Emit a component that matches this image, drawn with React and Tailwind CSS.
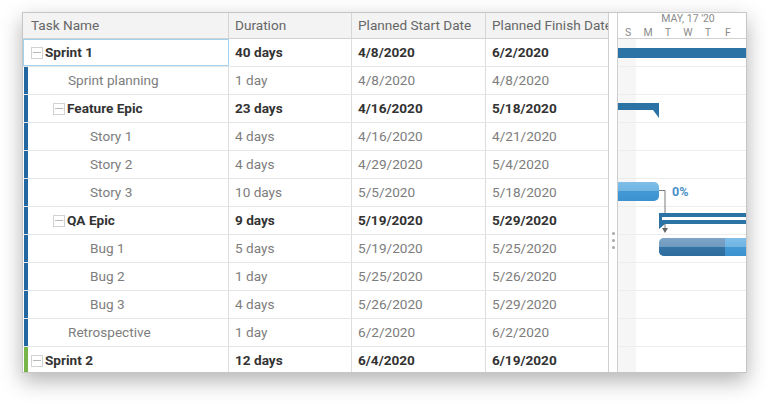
import React from "react";

const rows = [
  { name: "Sprint 1", lvl: 0, sum: true, dur: "40 days", s: "4/8/2020", f: "6/2/2020", strip: "none", focus: true },
  { name: "Sprint planning", lvl: 1, dur: "1 day", s: "4/8/2020", f: "4/8/2020", strip: "blue" },
  { name: "Feature Epic", lvl: 1, sum: true, dur: "23 days", s: "4/16/2020", f: "5/18/2020", strip: "blue" },
  { name: "Story 1", lvl: 2, dur: "4 days", s: "4/16/2020", f: "4/21/2020", strip: "blue" },
  { name: "Story 2", lvl: 2, dur: "4 days", s: "4/29/2020", f: "5/4/2020", strip: "blue" },
  { name: "Story 3", lvl: 2, dur: "10 days", s: "5/5/2020", f: "5/18/2020", strip: "blue" },
  { name: "QA Epic", lvl: 1, sum: true, dur: "9 days", s: "5/19/2020", f: "5/29/2020", strip: "blue" },
  { name: "Bug 1", lvl: 2, dur: "5 days", s: "5/19/2020", f: "5/25/2020", strip: "blue" },
  { name: "Bug 2", lvl: 2, dur: "1 day", s: "5/25/2020", f: "5/26/2020", strip: "blue" },
  { name: "Bug 3", lvl: 2, dur: "4 days", s: "5/26/2020", f: "5/29/2020", strip: "blue" },
  { name: "Retrospective", lvl: 1, dur: "1 day", s: "6/2/2020", f: "6/2/2020", strip: "blue" },
  { name: "Sprint 2", lvl: 0, sum: true, dur: "12 days", s: "6/4/2020", f: "6/19/2020", strip: "green" },
];

function Collapse() {
  return (
    <span className="w-[12px] h-[12px] border border-[#d2d2d2] flex items-center justify-center shrink-0">
      <span className="w-[8px] h-[1px] bg-[#b8b8b8]" />
    </span>
  );
}

function GanttBars() {
  return (
    <svg width="128" height="340" className="absolute left-0 top-0 pointer-events-none">
      <defs>
        <linearGradient id="lb" x1="0" y1="0" x2="0" y2="1">
          <stop offset="0" stopColor="#7fbee9" />
          <stop offset="0.5" stopColor="#6fb4e3" />
          <stop offset="0.5" stopColor="#4299d5" />
          <stop offset="1" stopColor="#3b92cf" />
        </linearGradient>
        <linearGradient id="db" x1="0" y1="0" x2="0" y2="1">
          <stop offset="0" stopColor="#7ea5c6" />
          <stop offset="0.5" stopColor="#6f9abf" />
          <stop offset="0.5" stopColor="#3574a6" />
          <stop offset="1" stopColor="#2f6c9d" />
        </linearGradient>
      </defs>
      <rect x="0" y="9" width="128" height="10" fill="#2c73a5" />
      <polygon points="0,64 41,64 41,79 35,71 0,71" fill="#2c73a5" />
      <path d="M0 143 H36 A5 5 0 0 1 41 148 V157 A5 5 0 0 1 36 162 H0 Z" fill="url(#lb)" />
      <polyline points="41,151.5 47,151.5 47,190" stroke="#7a7a7a" fill="none" strokeWidth="1" />
      <polygon points="44,189 50,189 47,194" fill="#666" />
      <polygon points="41,174 128,174 128,185 47,185 41,190" fill="#2c73a5" />
      <rect x="44" y="178" width="84" height="3" fill="#ffffff" />
      <path d="M46 199 H128 V217 H46 A5 5 0 0 1 41 212 V204 A5 5 0 0 1 46 199 Z" fill="url(#lb)" />
      <path d="M46 199 H107 V217 H46 A5 5 0 0 1 41 212 V204 A5 5 0 0 1 46 199 Z" fill="url(#db)" />
      <text x="54" y="156.5" fontSize="12.5" fontWeight="700" fill="#4a8fc6" fontFamily="Roboto, sans-serif">0%</text>
    </svg>
  );
}

export default function App() {
  return (
    <div className="w-[768px] h-[404px] bg-white pt-[12px] pl-[22px] font-['Roboto',sans-serif]">
      <div className="w-[725px] h-[361px] border border-[#c6c6c6] flex overflow-hidden bg-white shadow-[0_8px_20px_rgba(0,0,0,0.3)]">
        {/* Grid */}
        <div className="w-[586px] shrink-0 border-r border-[#cfcfcf] flex flex-col">
          <div className="flex h-[26px] shrink-0 bg-[#f3f3f3] border-b border-[#d2d2d2] text-[13.6px] text-[#666] whitespace-nowrap">
            <div className="w-[206px] shrink-0 border-r border-[#d6d6d6] pl-[8px] flex items-center">Task Name</div>
            <div className="w-[123px] shrink-0 border-r border-[#d6d6d6] pl-[6px] flex items-center">Duration</div>
            <div className="w-[134px] shrink-0 border-r border-[#d6d6d6] pl-[6px] flex items-center">Planned Start Date</div>
            <div className="flex-1 min-w-0 pl-[6px] flex items-center overflow-hidden">Planned Finish Date</div>
          </div>
          {rows.map((r, i) => {
            const txt = r.sum ? "font-bold text-[#333333]" : "text-[#7d7d7d]";
            return (
              <div key={i} className={`flex h-[28px] shrink-0 border-b border-[#e6e6e6] text-[13.6px] whitespace-nowrap ${txt}`}>
                <div className={`w-[206px] shrink-0 border-r border-[#dedede] flex items-stretch ${r.focus ? "outline outline-1 outline-[#a3d2f0] -outline-offset-1" : ""}`}>
                  <div
                    className={`w-[4px] ml-[1px] shrink-0 ${
                      r.strip === "blue" ? "bg-[#2367a0]" : r.strip === "green" ? "bg-[#78b548]" : "bg-transparent"
                    }`}
                  />
                  {r.sum ? (
                    <div
                      className={`flex items-center gap-[2px] ${
                        r.lvl === 0 ? "pl-[3px]" : r.lvl === 1 ? "pl-[25px]" : "pl-[47px]"
                      }`}
                    >
                      <Collapse />
                      <span>{r.name}</span>
                    </div>
                  ) : (
                    <div className={`flex items-center ${r.lvl === 1 ? "pl-[40px]" : "pl-[62px]"}`}>{r.name}</div>
                  )}
                </div>
                <div className="w-[123px] shrink-0 border-r border-[#dedede] pl-[6px] flex items-center">{r.dur}</div>
                <div className="w-[134px] shrink-0 border-r border-[#dedede] pl-[6px] flex items-center">{r.s}</div>
                <div className="flex-1 pl-[6px] flex items-center">{r.f}</div>
              </div>
            );
          })}
        </div>
        {/* Splitter */}
        <div className="w-[8px] shrink-0 bg-white flex flex-col items-center pt-[219px] gap-[4px]">
          <span className="w-[3px] h-[3px] rounded-full bg-[#a8a8a8]" />
          <span className="w-[3px] h-[3px] rounded-full bg-[#a8a8a8]" />
          <span className="w-[3px] h-[3px] rounded-full bg-[#a8a8a8]" />
        </div>
        {/* Gantt */}
        <div className="flex-1 border-l border-[#cfcfcf] flex flex-col overflow-hidden">
          <div className="h-[26px] shrink-0 border-b border-[#d2d2d2] bg-white text-[#8a8a8a] overflow-hidden">
            <div className="w-[140px] text-center text-[10.5px] leading-[11px] whitespace-nowrap">MAY, 17 '20</div>
            <div className="flex text-[10.5px] leading-[12px] pt-[3px]">
              {["S", "M", "T", "W", "T", "F"].map((d, i) => (
                <div key={i} className="w-[20px] shrink-0 text-center">{d}</div>
              ))}
            </div>
          </div>
          <div className="relative flex-1">
            {rows.map((r, i) => (
              <div key={i} className="h-[28px] border-b border-[#ededed] bg-[linear-gradient(to_right,#f6f6f6_18px,#ffffff_18px)]" />
            ))}
            <GanttBars />
          </div>
        </div>
      </div>
    </div>
  );
}
